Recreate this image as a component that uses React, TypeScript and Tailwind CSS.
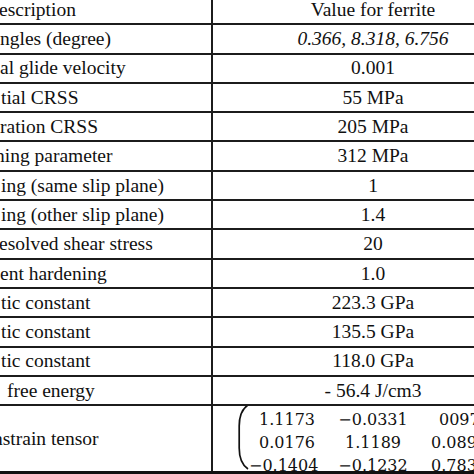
import React from "react";

const rows: { left: string; ml: number; right: string; italic?: boolean }[] = [
  { left: "escription", ml: -1, right: "Value for ferrite" },
  { left: "ngles (degree)", ml: 0, right: "0.366, 8.318, 6.756", italic: true },
  { left: "al glide velocity", ml: 0, right: "0.001" },
  { left: "tial CRSS", ml: 1, right: "55 MPa" },
  { left: "ration CRSS", ml: 0, right: "205 MPa" },
  { left: "ning parameter", ml: -5, right: "312 MPa" },
  { left: "ing (same slip plane)", ml: 1, right: "1" },
  { left: "ing (other slip plane)", ml: 1, right: "1.4" },
  { left: "esolved shear stress", ml: -1, right: "20" },
  { left: "ent hardening", ml: 0, right: "1.0" },
  { left: "tic constant", ml: 1, right: "223.3 GPa" },
  { left: "tic constant", ml: 1, right: "135.5 GPa" },
  { left: "tic constant", ml: 1, right: "118.0 GPa" },
  { left: "free energy", ml: 7, right: "- 56.4 J/cm3" },
];

const matrix = [
  ["1.1173", "\u22120.0331", "0097", 8],
  ["0.0176", "1.1189", "0.089", 0],
  ["\u22120.1404", "\u22120.1232", "0.783", 0],
] as const;

export default function App() {
  return (
    <div
      className="w-[474px] h-[474px] overflow-hidden bg-white text-[#111]"
      style={{ fontFamily: '"Liberation Serif", "Times New Roman", serif' }}
    >
      <div className="-mt-[4px] w-[540px]">
        {rows.map((r, i) => (
          <div key={i} className="flex h-[29.3px] border-b-2 border-[#1c1c1c]">
            <div className="w-[213px] shrink-0 border-r-2 border-[#1c1c1c] overflow-hidden flex items-center">
              <span
                className="whitespace-nowrap text-[19.5px] leading-none"
                style={{ marginLeft: r.ml }}
              >
                {r.left}
              </span>
            </div>
            <div className="w-[320px] shrink-0 flex items-center justify-center">
              <span className={`whitespace-nowrap text-[19.5px] leading-none ${r.italic ? "italic" : ""}`}>
                {r.right}
              </span>
            </div>
          </div>
        ))}
        <div className="flex h-[68px] border-b-[3px] border-[#111]">
          <div className="w-[213px] shrink-0 border-r-2 border-[#1c1c1c] overflow-hidden flex items-center">
            <span className="whitespace-nowrap text-[19.5px] leading-none" style={{ marginLeft: -7 }}>
              nstrain tensor
            </span>
          </div>
          <div className="w-[320px] shrink-0 flex items-start pl-[24px] pt-[0px] overflow-hidden">
            <svg width="12" height="66" viewBox="0 0 12 66" className="shrink-0 mt-[-2px]">
              <path
                d="M11 1 C5 5 2.2 12 2.2 22 L2.2 44 C2.2 54 5 61 11 65"
                fill="none"
                stroke="#111"
                strokeWidth="1.7"
              />
            </svg>
            <div
              className="flex flex-col text-[16px] leading-[23px] pt-[2px]"
              style={{ fontFamily: '"DejaVu Serif", serif' }}
            >
              {matrix.map((m, i) => (
                <div key={i} className="flex whitespace-nowrap">
                  <div className="w-[66px] text-right">{m[0]}</div>
                  <div className="w-[116px] text-center">{m[1]}</div>
                  <div className="w-[60px]" style={{ paddingLeft: m[3] }}>
                    {m[2]}
                  </div>
                </div>
              ))}
            </div>
          </div>
        </div>
      </div>
    </div>
  );
}
